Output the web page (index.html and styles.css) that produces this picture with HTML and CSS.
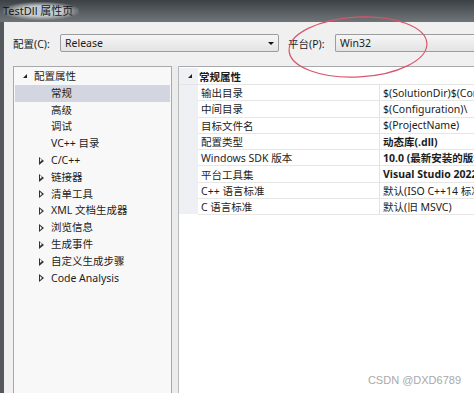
FILE: index.html
```html
<!DOCTYPE html>
<html lang="zh-CN">
<head>
  <meta charset="UTF-8" />
  <title>TestDll 属性页</title>
  <link rel="stylesheet" href="styles.css">
</head>
<body>

  <div class="titlebar"><span class="title">TestDll 属性页</span></div>

  <div class="window">
    <div class="config-row">
      <span class="label">配置(C):</span>
      <div class="select select-config">
        <span>Release</span>
        <span class="arrow"></span>
      </div>
      <span class="label label-platform">平台(P):</span>
      <div class="select select-platform">
        <span>Win32</span>
      </div>
    </div>

    <div class="panels">
      <ul class="tree">
        <li class="root"><span class="tri-open"></span>配置属性</li>
        <li class="leaf selected">常规</li>
        <li class="leaf">高级</li>
        <li class="leaf">调试</li>
        <li class="leaf">VC++ 目录</li>
        <li class="branch"><span class="tri-closed"></span>C/C++</li>
        <li class="branch"><span class="tri-closed"></span>链接器</li>
        <li class="branch"><span class="tri-closed"></span>清单工具</li>
        <li class="branch"><span class="tri-closed"></span>XML 文档生成器</li>
        <li class="branch"><span class="tri-closed"></span>浏览信息</li>
        <li class="branch"><span class="tri-closed"></span>生成事件</li>
        <li class="branch"><span class="tri-closed"></span>自定义生成步骤</li>
        <li class="branch"><span class="tri-closed"></span>Code Analysis</li>
      </ul>

      <div class="splitter"></div>

      <div class="grid">
        <div class="grid-head"><span class="tri-open"></span>常规属性</div>
        <div class="prop"><span class="name">输出目录</span><span class="value">$(SolutionDir)$(Configuration)\</span></div>
        <div class="prop"><span class="name">中间目录</span><span class="value">$(Configuration)\</span></div>
        <div class="prop"><span class="name">目标文件名</span><span class="value">$(ProjectName)</span></div>
        <div class="prop"><span class="name">配置类型</span><span class="value bold">动态库(.dll)</span></div>
        <div class="prop"><span class="name">Windows SDK 版本</span><span class="value bold">10.0 (最新安装的版本)</span></div>
        <div class="prop"><span class="name">平台工具集</span><span class="value bold">Visual Studio 2022 (v143)</span></div>
        <div class="prop"><span class="name">C++ 语言标准</span><span class="value">默认(ISO C++14 标准)</span></div>
        <div class="prop"><span class="name">C 语言标准</span><span class="value">默认(旧 MSVC)</span></div>
      </div>
    </div>
  </div>

  <svg class="circle-mark" width="150" height="80" viewBox="0 0 150 80">
    <ellipse cx="72" cy="33" rx="69" ry="30" transform="rotate(-3 72 33)" fill="none" stroke="#d8566b" stroke-width="1.2" />
  </svg>

  <div class="watermark">CSDN @DXD6789</div>

</body>
</html>
```

FILE: styles.css
```css
body {
  margin: 0;
  width: 474px;
  height: 393px;
  overflow: hidden;
  position: relative;
  font-family: "Noto Sans", "Noto Sans CJK SC", sans-serif;
  font-size: 10.5px;
  color: #1c1c1c;
  background-color: #ffffff;
}

.titlebar {
  height: 22px;
  background: linear-gradient(#3c4145, #5c6165 60%, #6f7478);
  display: flex;
  align-items: center;
  padding-left: 3px;
}

.title {
  font-size: 11px;
  color: #1a1a1a;
  background: radial-gradient(ellipse at center, rgba(210,214,217,0.9) 40%, rgba(210,214,217,0) 75%);
  padding: 0 6px 0 0;
  line-height: 18px;
}

.window {
  height: 371px;
  border-left: 4px solid #55595d;
  background-color: #f0f0f0;
  display: flex;
  flex-direction: column;
}

.config-row {
  display: flex;
  align-items: center;
  height: 20px;
  margin-top: 11px;
  padding-left: 9px;
}

.label {
  width: 47px;
}

.label-platform {
  margin-left: 9px;
}

.select {
  height: 18px;
  box-sizing: border-box;
  border: 1px solid #9a9c9e;
  border-radius: 2px;
  background: linear-gradient(#f6f6f6, #e3e3e3);
  display: flex;
  align-items: center;
  padding-left: 4px;
  position: relative;
}

.select-config {
  width: 219px;
}

.select-platform {
  flex: 1;
  border-right: none;
  border-radius: 2px 0 0 2px;
}

.arrow {
  position: absolute;
  right: 4px;
  top: 7px;
  border-left: 3px solid transparent;
  border-right: 3px solid transparent;
  border-top: 3px solid #111;
}

.panels {
  display: flex;
  flex: 1;
  margin-top: 13px;
  padding-left: 9px;
  min-width: 0;
}

.tree {
  list-style: none;
  margin: 0;
  padding: 1px 1px 0;
  width: 155px;
  flex-shrink: 0;
  border: 1px solid #a7a9ab;
  border-bottom: none;
  background-color: #f8f8f8;
}

.tree li {
  height: 16.8px;
  line-height: 16.8px;
  white-space: nowrap;
  display: flex;
  align-items: center;
}

.tree .root {
  padding-left: 8px;
}

.tree .leaf {
  padding-left: 36px;
}

.tree .branch {
  padding-left: 24px;
}

.tree .selected {
  background-color: #d3d6e0;
}

.tri-open {
  width: 0;
  height: 0;
  border-left: 4px solid transparent;
  border-bottom: 4px solid #222;
  margin-right: 7px;
}

.tri-closed {
  width: 3px;
  height: 5px;
  box-sizing: border-box;
  border-left: 1px solid #333;
  position: relative;
  margin-right: 9px;
}

.tri-closed::before {
  content: "";
  position: absolute;
  left: -1px;
  top: -1px;
  border-top: 4px solid transparent;
  border-bottom: 4px solid transparent;
  border-left: 5px solid #333;
}

.tri-closed::after {
  content: "";
  position: absolute;
  left: 0;
  top: 0.5px;
  border-top: 2.5px solid transparent;
  border-bottom: 2.5px solid transparent;
  border-left: 2.8px solid #f8f8f8;
}

.splitter {
  width: 6px;
  flex-shrink: 0;
  border-right: 1px solid #b8babc;
  background-color: #ececec;
}

.grid {
  flex: 1;
  min-width: 0;
  overflow: hidden;
  border-top: 1px solid #a7a9ab;
  background-color: #ffffff;
  padding-top: 1px;
  background-image: linear-gradient(#eef0f4, #eef0f4);
  background-size: 19px 146px;
  background-repeat: no-repeat;
  background-position: 0 1px;
}

.grid-head {
  height: 16px;
  display: flex;
  align-items: center;
  padding-left: 9px;
  font-weight: bold;
  border-bottom: 1px solid #e4e4e4;
}

.prop {
  height: 16.3px;
  box-sizing: border-box;
  display: flex;
  align-items: center;
  margin-left: 19px;
  border-bottom: 1px solid #e6e6e6;
  white-space: nowrap;
}

.name {
  width: 182px;
  flex-shrink: 0;
  padding-left: 3px;
  box-sizing: border-box;
  align-self: stretch;
  display: flex;
  align-items: center;
  border-right: 1px solid #e2e2e2;
}

.value {
  padding-left: 3px;
}

.bold {
  font-weight: bold;
}

.circle-mark {
  position: absolute;
  left: 286px;
  top: 14px;
}

.watermark {
  position: absolute;
  right: 13px;
  bottom: 7px;
  font-family: "Liberation Sans", Arial, sans-serif;
  font-size: 11px;
  color: #a9a9a9;
}
```
